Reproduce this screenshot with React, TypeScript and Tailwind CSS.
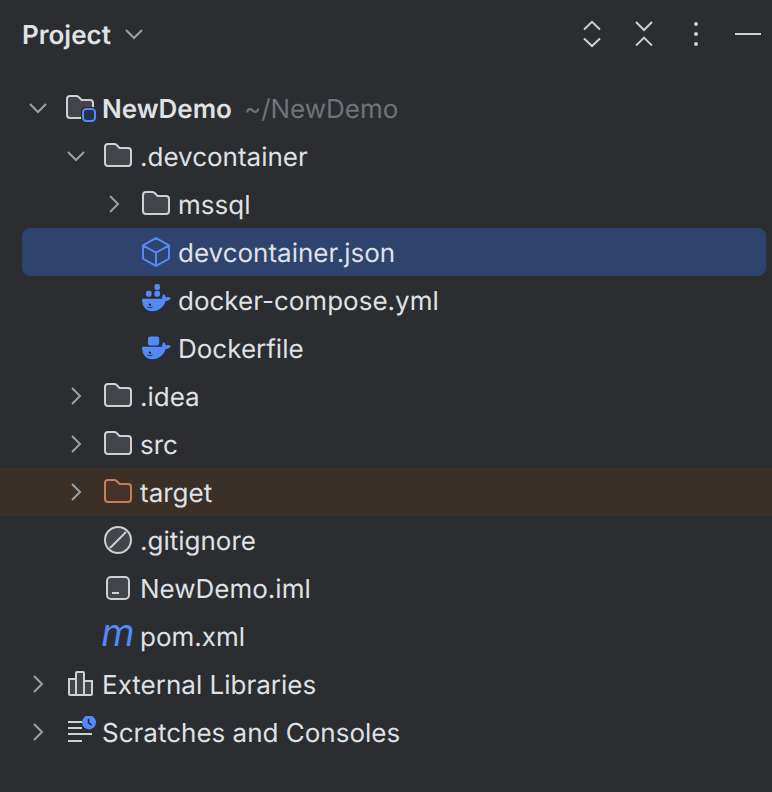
import type { ReactNode } from 'react';

const FOLDER = 'M3 2H6.2C6.6 2 6.9 2.15 7.2 2.4L8.8 4H13C13.83 4 14.5 4.67 14.5 5.5V11.5C14.5 12.33 13.83 13 13 13H3C2.17 13 1.5 12.33 1.5 11.5V3.5C1.5 2.67 2.17 2 3 2Z';
const WHALE = 'M1 7.4H11C11 6.5 11.3 5.7 11.8 5C12.4 5.5 12.8 6.1 12.9 6.7C13.8 6.4 14.7 6.5 15.5 7C15 8 14 8.5 12.8 8.5C12 11.5 9.5 13.6 6 13.6C2.8 13.6 1 11 1 7.4Z';

function Icon({ children }: { children: ReactNode }) {
  return (
    <svg viewBox="0 0 16 16" fill="none" className="w-8 h-8 shrink-0">
      {children}
    </svg>
  );
}

function Folder({ tone = 'gray' }: { tone?: 'gray' | 'orange' }) {
  return (
    <Icon>
      <path
        d={FOLDER}
        fill={tone === 'orange' ? '#45322b' : '#43454a'}
        stroke={tone === 'orange' ? '#c77d55' : '#ced0d6'}
      />
    </Icon>
  );
}

function ModuleFolder() {
  return (
    <Icon>
      <path d={FOLDER} fill="#43454a" stroke="#ced0d6" />
      <rect x="8.5" y="7.5" width="8" height="8" rx="2" fill="#2b2d30" />
      <rect x="9.5" y="8.5" width="6" height="6" rx="1.6" fill="#25324d" stroke="#548af7" />
    </Icon>
  );
}

function Cube() {
  return (
    <Icon>
      <path
        d="M8 1L14.5 4.7V11.3L8 15L1.5 11.3V4.7L8 1ZM1.5 4.7L8 8.3L14.5 4.7M8 8.3V15"
        stroke="#548af7"
        strokeLinejoin="round"
      />
    </Icon>
  );
}

function Whale() {
  return (
    <>
      <path d={WHALE} fill="#548af7" />
      <circle cx="5" cy="10.4" r=".6" fill="#2b2d30" />
      <path d="M3.6 11.4C4.4 12 5.4 12 6.2 11.4" stroke="#2b2d30" strokeWidth=".5" />
    </>
  );
}

function DockerCompose() {
  return (
    <Icon>
      <Whale />
      <rect x="7.2" y="0" width="2.8" height="3" rx="1" fill="#548af7" />
      <rect x="3" y="3.4" width="2.8" height="3" rx="1" fill="#548af7" />
      <rect x="7.2" y="3.4" width="2.8" height="3" rx="1" fill="#548af7" />
    </Icon>
  );
}

function Dockerfile() {
  return (
    <Icon>
      <Whale />
      <rect x="4" y="2.2" width="5.6" height="4.6" rx="1" fill="#548af7" />
    </Icon>
  );
}

function Ignored() {
  return (
    <Icon>
      <circle cx="8" cy="8" r="6.5" fill="#43454a" stroke="#ced0d6" />
      <path d="M4 12L12 4" stroke="#ced0d6" />
    </Icon>
  );
}

function Iml() {
  return (
    <Icon>
      <rect x="2.5" y="2.5" width="11" height="11" rx="2" fill="#43454a" stroke="#ced0d6" />
      <path d="M5 10.5H8.5" stroke="#ced0d6" />
    </Icon>
  );
}

function Maven() {
  return (
    <span className="w-8 h-8 shrink-0 flex items-center justify-center font-['Inter',sans-serif] italic text-[38px] leading-none text-[#548af7] -translate-y-[3px]">
      m
    </span>
  );
}

function Libraries() {
  return (
    <Icon>
      <path
        d="M2.5 5.5H6V13.5H3C2.72 13.5 2.5 13.28 2.5 13V5.5ZM6 2.5C6 2.22 6.22 2 6.5 2H9.5C9.78 2 10 2.22 10 2.5V13.5H6V2.5ZM10 6.5H14V13C14 13.28 13.78 13.5 13.5 13.5H10V6.5Z"
        fill="#43454a"
        stroke="#ced0d6"
      />
    </Icon>
  );
}

function Scratches() {
  return (
    <Icon>
      <path d="M2 3H9M2 6H9M2 9H14M2 12.5H9" stroke="#ced0d6" />
      <circle cx="12.5" cy="3.2" r="3.5" fill="#548af7" />
      <path d="M12.3 1.4V3.4L13.8 4.6" stroke="#2b2d30" strokeWidth=".8" />
    </Icon>
  );
}

function Chevron({ open }: { open: boolean }) {
  return (
    <svg viewBox="0 0 16 16" fill="none" className="w-8 h-8 shrink-0">
      <path d={open ? 'M4 6L8 10L12 6' : 'M6 4L10 8L6 12'} stroke="#9da0a8" strokeWidth="1" />
    </svg>
  );
}

function ToolIcon({ d }: { d: string }) {
  return (
    <svg viewBox="0 0 16 16" fill="none" className="w-8 h-8">
      <path d={d} stroke="#ced0d6" strokeWidth="1" />
    </svg>
  );
}

type Node = {
  name: string;
  depth: 0 | 1 | 2;
  icon: ReactNode;
  open?: boolean;
  hint?: string;
  bold?: boolean;
  selected?: boolean;
  excluded?: boolean;
};

const DEPTH = { 0: 'pl-0', 1: 'pl-[38px]', 2: 'pl-[76px]' };

const TREE: Node[] = [
  { name: 'NewDemo', depth: 0, icon: <ModuleFolder />, open: true, hint: '~/NewDemo', bold: true },
  { name: '.devcontainer', depth: 1, icon: <Folder />, open: true },
  { name: 'mssql', depth: 2, icon: <Folder />, open: false },
  { name: 'devcontainer.json', depth: 2, icon: <Cube />, selected: true },
  { name: 'docker-compose.yml', depth: 2, icon: <DockerCompose /> },
  { name: 'Dockerfile', depth: 2, icon: <Dockerfile /> },
  { name: '.idea', depth: 1, icon: <Folder />, open: false },
  { name: 'src', depth: 1, icon: <Folder />, open: false },
  { name: 'target', depth: 1, icon: <Folder tone="orange" />, open: false, excluded: true },
  { name: '.gitignore', depth: 1, icon: <Ignored /> },
  { name: 'NewDemo.iml', depth: 1, icon: <Iml /> },
  { name: 'pom.xml', depth: 1, icon: <Maven /> },
  { name: 'External Libraries', depth: 0, icon: <Libraries />, open: false },
  { name: 'Scratches and Consoles', depth: 0, icon: <Scratches />, open: false },
];

function Row({ node }: { node: Node }) {
  return (
    <div className={node.excluded ? 'bg-[#3b3028]' : ''}>
      <div
        className={`ml-[22px] mr-[6px] h-12 flex items-center rounded-lg ${DEPTH[node.depth]} ${
          node.selected ? 'bg-[#2e436e]' : ''
        }`}
      >
        <span className="w-8 h-8 shrink-0">
          {node.open !== undefined && <Chevron open={node.open} />}
        </span>
        <span className="ml-[10px] shrink-0">{node.icon}</span>
        <span className={`ml-[6px] pt-0.5 whitespace-nowrap ${node.bold ? 'font-semibold' : ''}`}>{node.name}</span>
        {node.hint && <span className="ml-3 pt-0.5 text-[#6f737a]">{node.hint}</span>}
      </div>
    </div>
  );
}

export default function App() {
  return (
    <div className="w-[772px] h-[792px] overflow-hidden bg-[#2b2d30] text-[#dfe1e5] font-['Inter',sans-serif] text-[26px] [text-rendering:geometricPrecision]">
      <header className="h-[68px] pl-[22px] pr-2 flex items-center justify-between">
        <div className="flex items-center gap-[7px]">
          <span className="font-semibold pt-0.5">Project</span>
          <Chevron open />
        </div>
        <div className="flex items-center gap-5">
          <ToolIcon d="M4 5.7L8 1.9L12 5.7M4 10.2L8 14L12 10.2" />
          <ToolIcon d="M4 2L8 6L12 2M4 13.8L8 9.8L12 13.8" />
          <svg viewBox="0 0 16 16" className="w-8 h-8">
            <circle cx="8" cy="3" r="1" fill="#ced0d6" />
            <circle cx="8" cy="8" r="1" fill="#ced0d6" />
            <circle cx="8" cy="13" r="1" fill="#ced0d6" />
          </svg>
          <svg viewBox="0 0 16 16" fill="none" className="w-8 h-8">
            <path d="M1.5 8H14.5" stroke="#ced0d6" />
          </svg>
        </div>
      </header>
      <div className="mt-4">
        {TREE.map((node) => (
          <Row key={node.name} node={node} />
        ))}
      </div>
    </div>
  );
}
